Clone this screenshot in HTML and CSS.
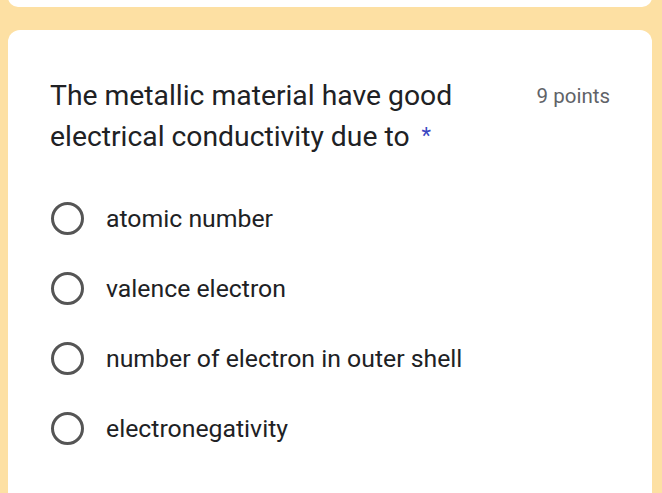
FILE: index.html
```html
<!DOCTYPE html>
<html>
<head>
<meta charset="utf-8">
<link rel="stylesheet" href="styles.css">
</head>
<body>
<div class="page">
  <div class="card card-top"></div>
  <div class="card card-q">
    <div class="q-head">
      <div class="q-title">The metallic material have good electrical conductivity due to<span class="req">*</span></div>
      <div class="q-points">9 points</div>
    </div>
    <div class="options">
      <label class="opt"><span class="radio"></span><span class="opt-text">atomic number</span></label>
      <label class="opt"><span class="radio"></span><span class="opt-text">valence electron</span></label>
      <label class="opt"><span class="radio"></span><span class="opt-text">number of electron in outer shell</span></label>
      <label class="opt"><span class="radio"></span><span class="opt-text">electronegativity</span></label>
    </div>
  </div>
</div>
</body>
</html>
```
FILE: styles.css
```css
html, body {
  margin: 0;
  padding: 0;
  width: 662px;
  height: 493px;
  overflow: hidden;
  background: #fde0a3;
  font-family: Roboto, "Noto Sans", sans-serif;
}
.page {
  padding: 0 10px 0 8px;
}
.card {
  background: #ffffff;
  border-radius: 12px;
}
.card-top {
  height: 20px;
  margin-top: -13px;
}
.card-q {
  margin-top: 23px;
  height: 463px;
  padding: 46px 0 0 42px;
  box-sizing: border-box;
  border-bottom-left-radius: 0;
  border-bottom-right-radius: 0;
}
.q-head {
  display: flex;
  justify-content: space-between;
  align-items: flex-start;
}
.q-title {
  width: 455px;
  font-size: 28.3px;
  line-height: 40px;
  color: #202124;
}
.req {
  color: #3b47c2;
  font-size: 22px;
  vertical-align: 3px;
  margin-left: 12px;
}
.q-points {
  font-size: 20.5px;
  line-height: 40px;
  color: #5f6368;
  margin-right: 42px;
}
.options {
  margin-top: 45px;
  display: flex;
  flex-direction: column;
  gap: 37px;
}
.opt {
  display: flex;
  align-items: center;
  height: 33px;
}
.radio {
  width: 27px;
  height: 27px;
  border: 3px solid #555555;
  border-radius: 50%;
  margin-left: 1px;
  flex-shrink: 0;
}
.opt-text {
  margin-left: 22px;
  font-size: 24.8px;
  color: #202124;
}
```
